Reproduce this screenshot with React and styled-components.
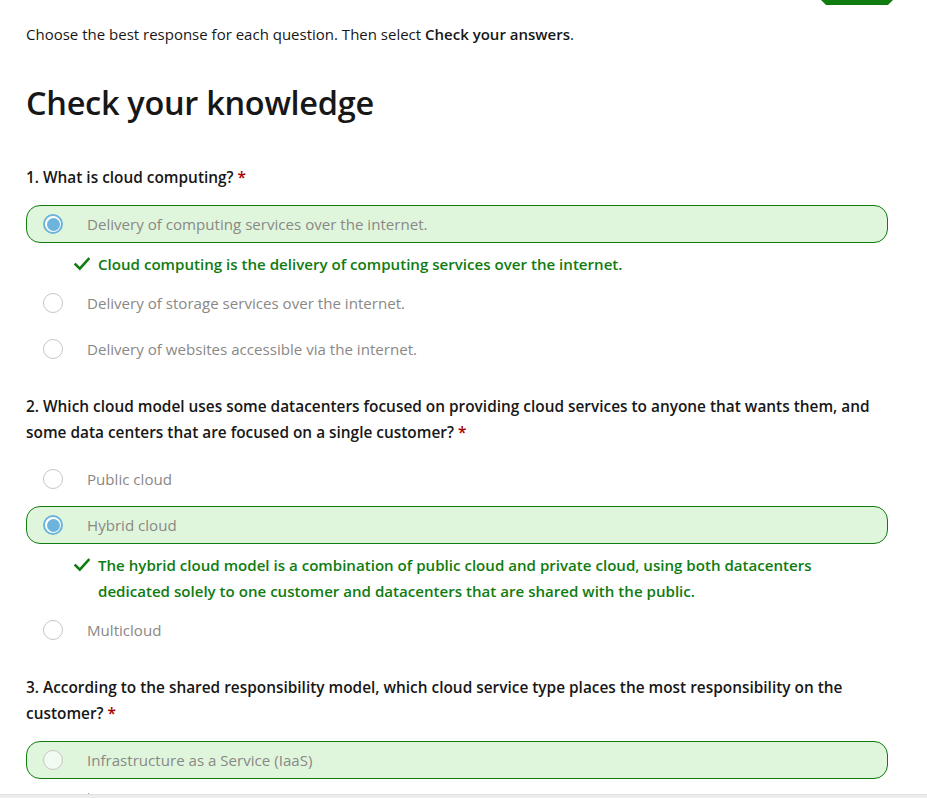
import React from "react";
import styled, { createGlobalStyle } from "styled-components";

const GlobalStyle = createGlobalStyle`
  html, body {
    margin: 0;
    padding: 0;
    background: #fff;
  }
  body {
    font-family: "Open Sans", "Noto Sans", "Liberation Sans", sans-serif;
    color: #171717;
    overflow: hidden;
  }
`;

const Page = styled.div`
  position: relative;
  width: 862px;
  padding: 21px 0 0 26px;
`;

const TopBadge = styled.div`
  position: absolute;
  top: 0;
  left: 821px;
  width: 72px;
  height: 5px;
  background: #107c10;
  clip-path: polygon(0 0, 100% 0, 93% 100%, 7% 100%);
`;

const BottomBar = styled.div`
  position: fixed;
  left: 0;
  right: 0;
  bottom: 0;
  height: 3px;
  background: #ededed;
  border-top: 1px solid #e1e1e1;
`;

const Intro = styled.p`
  margin: 0;
  font-size: 15px;
  line-height: 26px;
  b {
    font-weight: 600;
  }
`;

const Title = styled.h1`
  margin: 33px 0 39px;
  font-size: 32.5px;
  font-weight: 600;
  line-height: 46px;
  letter-spacing: -0.3px;
`;

const Question = styled.section`
  display: flex;
  flex-direction: column;
  margin-bottom: 26px;
`;

const Prompt = styled.div`
  font-size: 15.4px;
  font-weight: 600;
  line-height: 26px;
  margin-bottom: 14px;
`;

const Required = styled.span`
  color: #a80000;
  margin-left: 4px;
`;

const Options = styled.div`
  display: flex;
  flex-direction: column;
  gap: 8px;
`;

const Option = styled.label`
  display: flex;
  align-items: center;
  height: 38px;
  box-sizing: border-box;
  padding-left: 16px;
  border-radius: 14px;
  border: 1px solid ${(p) => (p.$correct ? "#107c10" : "transparent")};
  background: ${(p) => (p.$correct ? "#dff6dd" : "transparent")};
`;

const Radio = styled.span`
  position: relative;
  width: 20px;
  height: 20px;
  box-sizing: border-box;
  border-radius: 50%;
  border: ${(p) => (p.$checked ? "2px solid #6cb4dc" : "1px solid #c8c6c4")};
  background: ${(p) => (p.$checked ? "#fff" : "rgba(255,255,255,0.6)")};
  flex-shrink: 0;
  &::after {
    content: "";
    display: ${(p) => (p.$checked ? "block" : "none")};
    position: absolute;
    inset: 1.5px;
    border-radius: 50%;
    background: #6cb4dc;
  }
`;

const OptionText = styled.span`
  margin-left: 24px;
  font-size: 15.1px;
  color: #8a8886;
`;

const Feedback = styled.div`
  display: flex;
  align-items: flex-start;
  padding-left: 48px;
  padding-right: 60px;
  margin-bottom: -1px;
  color: #107c10;
  font-size: 15.1px;
  font-weight: 600;
  line-height: 26px;
  svg {
    flex-shrink: 0;
    margin: 6px 8px 0 0;
  }
`;

function Check() {
  return (
    <svg width="16" height="14" viewBox="0 0 16 14">
      <path
        d="M1.5 7.5 L5.8 11.6 L14.5 2"
        fill="none"
        stroke="#107c10"
        strokeWidth="2.6"
        strokeLinecap="square"
      />
    </svg>
  );
}

const questions = [
  {
    prompt: "1. What is cloud computing?",
    options: [
      { text: "Delivery of computing services over the internet.", checked: true, correct: true },
      { text: "Delivery of storage services over the internet." },
      { text: "Delivery of websites accessible via the internet." },
    ],
    feedback: "Cloud computing is the delivery of computing services over the internet.",
  },
  {
    prompt:
      "2. Which cloud model uses some datacenters focused on providing cloud services to anyone that wants them, and some data centers that are focused on a single customer?",
    options: [
      { text: "Public cloud" },
      { text: "Hybrid cloud", checked: true, correct: true },
      { text: "Multicloud" },
    ],
    feedback:
      "The hybrid cloud model is a combination of public cloud and private cloud, using both datacenters dedicated solely to one customer and datacenters that are shared with the public.",
  },
  {
    prompt:
      "3. According to the shared responsibility model, which cloud service type places the most responsibility on the customer?",
    options: [
      { text: "Infrastructure as a Service (IaaS)", correct: true },
      { text: "Software as a Service (SaaS)" },
      { text: "Platform as a Service (PaaS)" },
    ],
    feedback:
      "In IaaS, the customer has the most responsibility, with the cloud provider being responsible for the basics of physical security, power, and connectivity.",
  },
];

export default function App() {
  return (
    <>
      <GlobalStyle />
      <TopBadge />
      <Page>
        <Intro>
          Choose the best response for each question. Then select <b>Check your answers</b>.
        </Intro>
        <Title>Check your knowledge</Title>
        {questions.map((q) => (
          <Question key={q.prompt}>
            <Prompt>
              {q.prompt}
              <Required>*</Required>
            </Prompt>
            <Options>
              {q.options.map((o) => (
                <React.Fragment key={o.text}>
                  <Option $correct={o.correct}>
                    <Radio $checked={o.checked} />
                    <OptionText>{o.text}</OptionText>
                  </Option>
                  {o.correct && (
                    <Feedback>
                      <Check />
                      <span>{q.feedback}</span>
                    </Feedback>
                  )}
                </React.Fragment>
              ))}
            </Options>
          </Question>
        ))}
      </Page>
      <BottomBar />
    </>
  );
}
